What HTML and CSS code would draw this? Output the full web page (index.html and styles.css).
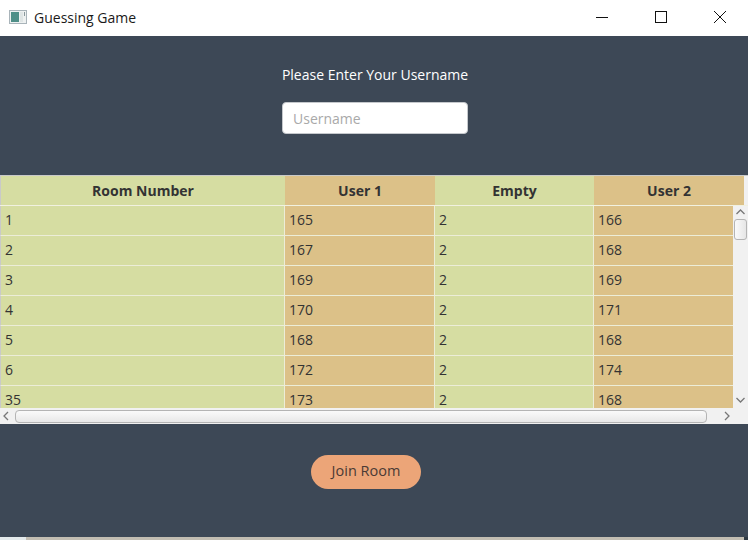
FILE: index.html
```html
<!DOCTYPE html>
<html lang="en">
<head>
    <meta charset="UTF-8">
    <title>Guessing Game</title>
    <link rel="stylesheet" href="styles.css">
</head>
<body>
    <div class="window">
        <div class="titlebar">
            <svg class="app-icon" width="18" height="16" viewBox="0 0 18 16">
                <rect x="0.5" y="1.5" width="17" height="13" fill="#eef1f1" stroke="#a9b4ba"/>
                <rect x="2" y="3" width="8" height="10" fill="#4f8f88"/>
                <rect x="11" y="3" width="3" height="10" fill="#dfe5e5"/>
                <rect x="15" y="3" width="1" height="4" fill="#8a989c"/>
            </svg>
            <span class="app-title">Guessing Game</span>
            <div class="win-controls">
                <svg width="14" height="14" viewBox="0 0 14 14"><path d="M1 7.5H13" stroke="#111" fill="none"/></svg>
                <svg width="14" height="14" viewBox="0 0 14 14"><rect x="1.5" y="1.5" width="11" height="11" stroke="#111" fill="none"/></svg>
                <svg width="14" height="14" viewBox="0 0 14 14"><path d="M1 1L13 13M13 1L1 13" stroke="#111" fill="none"/></svg>
            </div>
        </div>

        <div class="login">
            <p class="prompt">Please Enter Your Username</p>
            <input class="username" type="text" placeholder="Username">
        </div>

        <div class="table-view">
            <div class="cols table-head">
                <div class="green">Room Number</div>
                <div class="tan">User 1</div>
                <div class="green">Empty</div>
                <div class="tan">User 2</div>
            </div>
            <div class="table-middle">
                <div class="rows">
                    <div class="cols row"><div class="green">1</div><div class="tan">165</div><div class="green">2</div><div class="tan">166</div></div>
                    <div class="cols row"><div class="green">2</div><div class="tan">167</div><div class="green">2</div><div class="tan">168</div></div>
                    <div class="cols row"><div class="green">3</div><div class="tan">169</div><div class="green">2</div><div class="tan">169</div></div>
                    <div class="cols row"><div class="green">4</div><div class="tan">170</div><div class="green">2</div><div class="tan">171</div></div>
                    <div class="cols row"><div class="green">5</div><div class="tan">168</div><div class="green">2</div><div class="tan">168</div></div>
                    <div class="cols row"><div class="green">6</div><div class="tan">172</div><div class="green">2</div><div class="tan">174</div></div>
                    <div class="cols row"><div class="green">35</div><div class="tan">173</div><div class="green">2</div><div class="tan">168</div></div>
                </div>
                <div class="vbar">
                    <svg width="15" height="12" viewBox="0 0 15 12"><path d="M3.5 8L7.5 4L11.5 8" stroke="#777" stroke-width="1.3" fill="none"/></svg>
                    <div class="vthumb"></div>
                    <svg class="arrow-end" width="15" height="12" viewBox="0 0 15 12"><path d="M3.5 4L7.5 8L11.5 4" stroke="#777" stroke-width="1.3" fill="none"/></svg>
                </div>
            </div>
            <div class="hbar">
                <svg width="14" height="16" viewBox="0 0 14 16"><path d="M8 4L4 8L8 12" stroke="#777" stroke-width="1.3" fill="none"/></svg>
                <div class="hthumb"></div>
                <svg width="14" height="16" viewBox="0 0 14 16"><path d="M6 4L10 8L6 12" stroke="#777" stroke-width="1.3" fill="none"/></svg>
            </div>
        </div>

        <div class="actions">
            <button class="join">Join Room</button>
        </div>
        <div class="desktop-strip"></div>
    </div>
</body>
</html>
```

FILE: styles.css
```css
html, body {
    margin: 0;
    padding: 0;
}
body {
    font-family: "Open Sans", sans-serif;
    font-size: 14px;
}
.window {
    width: 748px;
    height: 540px;
    display: flex;
    flex-direction: column;
    background: #3d4856;
    overflow: hidden;
}
.titlebar {
    height: 36px;
    background: #fff;
    display: flex;
    align-items: center;
    padding-left: 9px;
    color: #1a1a1a;
}
.app-icon {
    margin-right: 7px;
    margin-top: -2px;
}
.app-title {
    flex: 1;
    margin-top: -1px;
}
.win-controls {
    display: flex;
    gap: 45px;
    padding-right: 21px;
    margin-top: -3px;
}
.login {
    height: 139px;
    box-sizing: border-box;
    padding: 29px 0 0 2px;
    display: flex;
    flex-direction: column;
    align-items: center;
}
.prompt {
    margin: 0 0 17px;
    height: 20px;
    line-height: 20px;
    color: #fff;
}
.username {
    width: 186px;
    height: 32px;
    box-sizing: border-box;
    padding: 0 10px;
    border: 1px solid #c5c8cc;
    border-radius: 4px;
    background: #fff;
    font-family: inherit;
    font-size: 14px;
}
.username::placeholder {
    color: #a9a9a9;
    opacity: 1;
}
.table-view {
    height: 249px;
    display: flex;
    flex-direction: column;
    background: #f1f1f1;
    border-top: 1px solid #c9c9c9;
    box-sizing: border-box;
    color: #333;
}
.cols {
    display: grid;
    grid-template-columns: 285px 150px 159px 150px;
}
.green {
    background: #d6dda2;
}
.tan {
    background: #dcc188;
}
.cols .green:first-child {
    border-left: 1px solid #c9c9c9;
}
.table-head {
    height: 29px;
    background: #f1f1f1;
    border-bottom: 1px solid #f1f1e0;
    flex: none;
}
.table-head div {
    line-height: 29px;
    text-align: center;
    font-weight: 700;
}
.table-middle {
    height: 202px;
    display: flex;
}
.rows {
    width: 733px;
    overflow: hidden;
}
.row {
    height: 30px;
    width: 744px;
}
.row div {
    box-sizing: border-box;
    height: 30px;
    line-height: 27px;
    padding-left: 4px;
    border-bottom: 1px solid #ecedd8;
    border-right: 1px solid #ecedd8;
}
.vbar {
    width: 15px;
    display: flex;
    flex-direction: column;
    align-items: center;
    background: #f1f1f1;
}
.vthumb {
    width: 13px;
    height: 21px;
    margin-top: 1px;
    box-sizing: border-box;
    border: 1px solid #b4b4b4;
    border-radius: 3px;
    background: linear-gradient(to right, #fafafa, #e6e6e6);
}
.arrow-end {
    margin-top: auto;
    margin-bottom: 2px;
}
.hbar {
    height: 16px;
    display: flex;
    align-items: center;
    background: #f1f1f1;
    flex: none;
}
.hthumb {
    width: 692px;
    height: 13px;
    margin-left: 1px;
    box-sizing: border-box;
    border: 1px solid #b4b4b4;
    border-radius: 4px;
    background: linear-gradient(to bottom, #fafafa, #e8e8e8);
}
.hbar svg:last-child {
    margin-left: 12px;
}
.actions {
    height: 113px;
    display: flex;
    justify-content: center;
    padding: 31px 16px 0 0;
    box-sizing: border-box;
}
.join {
    width: 110px;
    height: 34px;
    border: none;
    border-radius: 17px;
    background: #eca578;
    color: #4a3a35;
    font-family: inherit;
    font-size: 14.5px;
    padding: 0 0 4px;
}
.desktop-strip {
    height: 3px;
    background: linear-gradient(to right, #e4eaec 26px, #c2bdb2 26px, #c2bdb2 744px, #2f3a44 744px);
}
```
